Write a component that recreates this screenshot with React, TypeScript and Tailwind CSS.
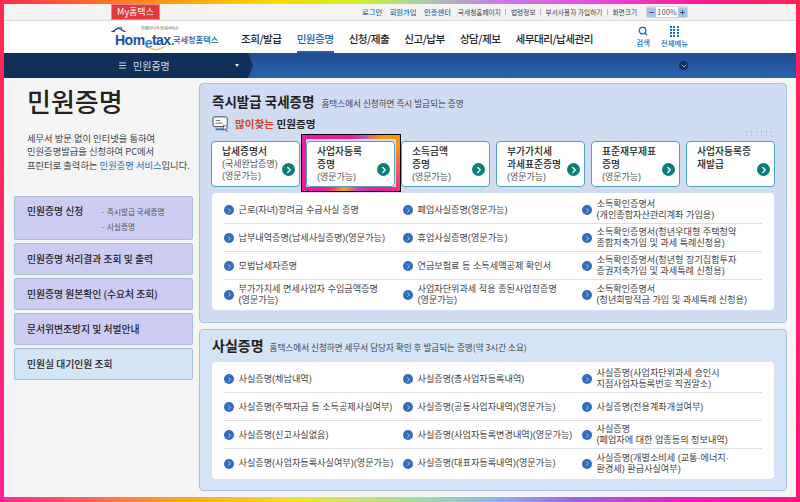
import { Fragment } from "react";
import { Search, ChevronRight, ChevronDown, Menu, Minus, Plus } from "lucide-react";

const font = "[font-family:'Noto_Sans_CJK_KR','Noto_Sans',sans-serif]";

const topLinksBlue = ["로그인", "회원가입", "인증센터"];
const topLinksGray = ["국세청홈페이지", "법령정보", "부서사용자 가입하기", "화면크기"];
const nav = ["조회/발급", "민원증명", "신청/제출", "신고/납부", "상담/제보", "세무대리/납세관리"];

const hot: { t: string[]; s: string[] }[] = [
  { t: ["납세증명서"], s: ["(국세완납증명)", "(영문가능)"] },
  { t: ["사업자등록", "증명"], s: ["(영문가능)"] },
  { t: ["소득금액", "증명"], s: ["(영문가능)"] },
  { t: ["부가가치세", "과세표준증명"], s: ["(영문가능)"] },
  { t: ["표준재무제표", "증명"], s: ["(영문가능)"] },
  { t: ["사업자등록증", "재발급"], s: [] },
];

const list1: string[][][] = [
  [["근로(자녀)장려금 수급사실 증명"], ["폐업사실증명(영문가능)"], ["소득확인증명서", "(개인종합자산관리계좌 가입용)"]],
  [["납부내역증명(납세사실증명)(영문가능)"], ["휴업사실증명(영문가능)"], ["소득확인증명서(청년우대형 주택청약", "종합저축가입 및 과세 특례신청용)"]],
  [["모범납세자증명"], ["연금보험료 등 소득세액공제 확인서"], ["소득확인증명서(청년형 장기집합투자", "증권저축가입 및 과세특례 신청용)"]],
  [["부가가치세 면세사업자 수입금액증명", "(영문가능)"], ["사업자단위과세 적용 종된사업장증명", "(영문가능)"], ["소득확인증명서", "(청년희망적금 가입 및 과세특례 신청용)"]],
];

const list2: string[][][] = [
  [["사실증명(체납내역)"], ["사실증명(총사업자등록내역)"], ["사실증명(사업자단위과세 승인시", "지점사업자등록번호 직권말소)"]],
  [["사실증명(주택자금 등 소득공제사실여부)"], ["사실증명(공동사업자내역)(영문가능)"], ["사실증명(전용계좌개설여부)"]],
  [["사실증명(신고사실없음)"], ["사실증명(사업자등록변경내역)(영문가능)"], ["사실증명", "(폐업자에 대한 업종등의 정보내역)"]],
  [["사실증명(사업자등록사실여부)(영문가능)"], ["사실증명(대표자등록내역)(영문가능)"], ["사실증명(개별소비세 (교통·에너지·", "환경세) 환급사실여부)"]],
];

function Lines({ items }: { items: string[] }) {
  return (
    <>
      {items.map((l, i) => (
        <Fragment key={l}>
          {i > 0 && <br />}
          {l}
        </Fragment>
      ))}
    </>
  );
}

function Bullet() {
  return (
    <span className="flex h-[10px] w-[10px] shrink-0 items-center justify-center rounded-full bg-[#2f6dbd]">
      <ChevronRight size={7} strokeWidth={3} className="text-[#c9d9ee]" />
    </span>
  );
}

function ListBox({ rows }: { rows: string[][][] }) {
  return (
    <div className="mx-[12px] rounded-[4px] bg-white px-[12px] pb-[2px] pt-[3px]">
      {rows.map((row, i) => (
        <div
          key={i}
          className={`grid h-[28px] grid-cols-[179px_179px_1fr] items-center pt-[1px] ${i < rows.length - 1 ? "border-b border-[#dfdfdf]" : ""}`}
        >
          {row.map((lines, j) => (
            <div key={j} className="flex items-center gap-[4.5px]">
              <Bullet />
              <div className="whitespace-nowrap text-[9.15px] leading-[11px] text-[#444] [font-family:'Liberation_Sans','Noto_Sans_CJK_KR',sans-serif]">
                <Lines items={lines} />
              </div>
            </div>
          ))}
        </div>
      ))}
    </div>
  );
}

function HotCard({ t, s, active }: { t: string[]; s: string[]; active?: boolean }) {
  return (
    <div className="relative h-[46px] w-[89px] rounded-[4px] border border-[#4ea3b8] bg-white pl-[10px] pt-[3px] [font-family:'Liberation_Sans','Noto_Sans_CJK_KR',sans-serif]">
      <div className="whitespace-nowrap text-[9.8px] font-medium leading-[13px] text-[#222]">
        <Lines items={t} />
      </div>
      {s.length > 0 && (
        <div className="whitespace-nowrap text-[9px] leading-[12px] text-[#555]">
          <Lines items={s} />
        </div>
      )}
      <span className="absolute right-[4px] top-[21px] flex h-[13px] w-[13px] items-center justify-center rounded-full bg-[#0b7f78]">
        <ChevronRight size={10} strokeWidth={3} className="text-white" />
      </span>
      {active && (
        <div className="pointer-events-none absolute -bottom-[6px] -left-[6px] -right-[7px] -top-[8px] border border-black bg-[conic-gradient(#f0189c_0deg,#b050c0_25deg,#f7941d_50deg,#f7941d_70deg,#f0189c_130deg,#d040b0_165deg,#f7a020_195deg,#f0189c_225deg,#f0189c_360deg)] p-[4px] [clip-path:polygon(0_0,100%_0,100%_100%,0_100%,0_0,5px_5px,5px_calc(100%-5px),calc(100%-5px)_calc(100%-5px),calc(100%-5px)_5px,5px_5px)]">
          <div className="h-full w-full border border-black" />
        </div>
      )}
    </div>
  );
}

const sideMenu = [
  "민원증명 처리결과 조회 및 출력",
  "민원증명 원본확인 (수요처 조회)",
  "문서위변조방지 및 처벌안내",
];

export default function App() {
  return (
    <div className={`relative h-[502px] w-[800px] overflow-hidden bg-[#f5f5f5] ${font}`}>
      {/* rainbow frame */}
      <div className="absolute inset-x-0 top-0 z-20 h-[4px] bg-[linear-gradient(90deg,#ff2a4d_0%,#ff8a1a_18%,#ffd500_33%,#cdf02a_45%,#a6d6a0_52%,#c77de8_62%,#e64bd8_75%,#ff1493_88%,#ff2255_100%)]" />
      <div className="absolute inset-x-0 bottom-0 z-20 h-[5px] bg-[linear-gradient(90deg,#ff2a8a_0%,#ffa020_22%,#f2e040_38%,#a0e0a0_52%,#8ab4f0_62%,#a060f0_72%,#e020d0_85%,#ff1480_100%)]" />
      <div className="absolute inset-y-0 left-0 z-20 w-[4px] bg-[linear-gradient(180deg,#ff2a4d_0%,#ff2090_100%)]" />
      <div className="absolute inset-y-0 right-0 z-20 w-[4px] bg-[linear-gradient(180deg,#ff2255_0%,#ff1480_100%)]" />

      <div className="flex h-full flex-col pt-[4px]">
        {/* utility bar */}
        <div className="flex h-[17px] items-center border-b border-[#dcdcdc] bg-[#f3f3f3] pl-[111px]">
          <div className="flex h-[16px] w-[49px] items-center justify-center border border-[#e88] bg-[#e23a3a] text-[9px] text-white">
            My홈택스
          </div>
          <div className="ml-[202px] flex items-center gap-[7.5px] text-[7.3px] font-medium text-[#1f6fb5]">
            {topLinksBlue.map((l) => (
              <span key={l} className="whitespace-nowrap">{l}</span>
            ))}
          </div>
          <div className="ml-[7px] flex items-center text-[6.7px] text-[#444]">
            {topLinksGray.map((l, i) => (
              <Fragment key={l}>
                {i > 0 && <span className="mx-[4.5px] h-[6px] w-px bg-[#bbb]" />}
                <span className="whitespace-nowrap">{l}</span>
              </Fragment>
            ))}
          </div>
          <div className="ml-[9px] flex h-[12px] w-[42px] items-center justify-between rounded-[2px] bg-[#d5d5d5] px-[1px]">
            <span className="flex h-[9px] w-[9px] items-center justify-center rounded-[1px] bg-[#a9c3e4]">
              <Minus size={7} strokeWidth={3} className="text-[#26486f]" />
            </span>
            <span className="bg-white px-[1px] text-[7.5px] leading-[10px] text-[#555]">100%</span>
            <span className="flex h-[9px] w-[9px] items-center justify-center rounded-[1px] bg-[#a9c3e4]">
              <Plus size={7} strokeWidth={3} className="text-[#26486f]" />
            </span>
          </div>
        </div>

        {/* header */}
        <div className="flex h-[32px] items-center bg-white pl-[110px]">
          <div className="relative flex h-[28px] w-[111px] shrink-0 items-end">
            <svg viewBox="0 0 60 14" className="absolute left-0 top-0 h-[14px] w-[30px]">
              <path d="M1 11 L17 1 L33 11 H28 L17 4.5 L10 8.5 V11 Z" fill="#1b4f9c" />
              <path d="M21 1 h3 v3 h-3 Z" fill="#1b4f9c" />
            </svg>
            <span className="absolute left-[31px] top-[3px] text-[4px] leading-[5px] text-[#555]">언제어디서 납세서비스</span>
            <span className="absolute left-[5px] top-[9px] text-[14px] font-bold leading-[16px] tracking-[-0.5px] text-[#13519e] [font-family:'Liberation_Sans',sans-serif]">
              Hom<span className="relative top-[3px] text-[#1d7ec9]">e</span>tax<span className="text-[#1fa14a]">.</span>
            </span>
            <svg viewBox="0 0 30 8" className="absolute left-[34px] top-[23px] h-[5px] w-[24px]">
              <path d="M1 1 Q15 10 29 1" fill="none" stroke="#f0a030" strokeWidth="1.6" />
            </svg>
            <span className="absolute left-[63px] top-[10px] whitespace-nowrap text-[8.2px] font-medium leading-[12px] text-[#1b5fa8]">국세청홈택스</span>
          </div>
          <div className="ml-[20px] flex h-full items-center gap-[15px]">
            {nav.map((n) => (
              <div
                key={n}
                className={`flex h-full items-center whitespace-nowrap border-b-2 pt-[5px] text-[10.6px] font-medium tracking-[-0.5px] ${n === "민원증명" ? "border-[#2a5da6] text-[#1a66b3]" : "border-transparent text-[#222]"}`}
              >
                {n}
              </div>
            ))}
          </div>
          <div className="ml-[43px] flex w-[14px] flex-col items-center">
            <Search size={10} strokeWidth={3.2} className="text-[#1b6fbe]" />
            <span className="mt-[2px] whitespace-nowrap text-[7.5px] font-medium leading-[10px] text-[#1b6fbe]">검색</span>
          </div>
          <div className="ml-[11px] flex flex-col items-center">
            <div className="grid h-[10px] w-[9px] grid-cols-3 gap-[1px]">
              {Array.from({ length: 12 }).map((_, i) => (
                <span key={i} className="h-[2px] w-[2px] bg-[#1b6fbe]" />
              ))}
            </div>
            <span className="mt-[2px] whitespace-nowrap text-[7.3px] font-medium leading-[10px] text-[#1b6fbe]">전체메뉴</span>
          </div>
        </div>

        {/* section bar */}
        <div className="relative flex h-[25px] items-center bg-[linear-gradient(180deg,#1f4c8f_0%,#2a62ae_100%)]">
          <div className="flex h-full w-[253px] shrink-0 items-center bg-[#102f59] pl-[118px] [clip-path:polygon(0_0,248px_0,100%_50%,248px_100%,0_100%)]">
            <Menu size={9} strokeWidth={2.5} className="text-[#d5dfec]" />
            <span className="ml-[6px] text-[10px] text-[#d5dfec]">민원증명</span>
            <span className="ml-[65px] h-0 w-0 border-x-[2.5px] border-t-[3px] border-x-transparent border-t-white" />
          </div>
          <span className="ml-[426px] flex h-[9px] w-[9px] items-center justify-center rounded-full bg-[#132f57]">
            <ChevronDown size={8} strokeWidth={3} className="text-[#9fb7d6]" />
          </span>
        </div>

        {/* body */}
        <div className="flex flex-1 pl-[14px] pr-[13px] pt-[5px]">
          {/* left column */}
          <div className="flex w-[179px] shrink-0 flex-col">
            <h1 className="ml-[13px] mt-[1px] whitespace-nowrap text-[26px] font-medium leading-[34px] text-[#222]">민원증명</h1>
            <p className="ml-[13px] mt-[14px] whitespace-nowrap text-[9.3px] leading-[13.3px] text-[#444]">
              세무서 방문 없이 인터넷을 통하여
              <br />
              민원증명발급을 신청하여 PC에서
              <br />
              프린터로 출력하는 <span className="text-[#1a72b8]">민원증명 서비스</span>입니다.
            </p>
            <div className="mt-[24px] flex h-[44px] items-start rounded-[2px] border border-[#a9bfe0] bg-[#ccccf2] pl-[12px] pt-[7px]">
              <span className="w-[74px] whitespace-nowrap text-[9.8px] font-medium leading-[15px] text-[#222]">민원증명 신청</span>
              <div className="whitespace-nowrap text-[7.6px] leading-[15px] text-[#555]">
                · 즉시발급 국세증명
                <br />
                · 사실증명
              </div>
            </div>
            <div className="mt-[3px] flex flex-col gap-[3px]">
              {sideMenu.map((m) => (
                <div key={m} className="flex h-[32px] items-center whitespace-nowrap rounded-[2px] border border-[#a9bfe0] bg-[#ccccf2] pl-[12px] text-[9.8px] font-medium text-[#222]">
                  {m}
                </div>
              ))}
              <div className="flex h-[32px] items-center rounded-[2px] border border-[#a9bfe0] bg-[#d4e5f5] pl-[12px] text-[9.8px] font-medium text-[#222]">
                민원실 대기인원 조회
              </div>
            </div>
          </div>

          {/* right column */}
          <div className="ml-[6px] flex flex-1 flex-col gap-[6px]">
            <section className="relative h-[240px] rounded-[4px] border border-[#a9c2e2] bg-[#d0dcf2]">
              <div className="ml-[12px] mt-[7px] flex items-baseline gap-[7px]">
                <h2 className="whitespace-nowrap text-[13.5px] font-bold leading-[20px] text-[#222]">즉시발급 국세증명</h2>
                <span className="whitespace-nowrap text-[8.6px] text-[#444]">홈택스에서 신청하면 즉시 발급되는 증명</span>
              </div>
              <div className="ml-[12px] mt-[4px] flex h-[18px] items-center gap-[5px]">
                <svg viewBox="0 0 20 18" className="h-[16px] w-[18px]">
                  <rect x="1" y="1" width="16" height="11" rx="2" fill="#fff" stroke="#333" strokeWidth="1" />
                  <path d="M4 5h5M4 8h8" stroke="#333" strokeWidth="0.8" />
                  <path d="M4 14h10v2H4z" fill="#2f6dbd" />
                  <path d="M13 10l5 3-2 1 1 3-1 .5-1-3-2 1z" fill="#fff" stroke="#333" strokeWidth="0.7" />
                </svg>
                <span className="whitespace-nowrap text-[10.6px] font-bold text-[#222]">
                  <span className="text-[#d8401f]">많이찾는</span> 민원증명
                </span>
              </div>
              <div className="absolute right-[12px] top-[46px] h-[6px] w-[30px] bg-[radial-gradient(circle,#a8bde0_1px,transparent_1px)] bg-[length:5px_4px]" />
              <div className="mx-[11px] mt-[8px] flex justify-between">
                {hot.map((c, i) => (
                  <HotCard key={i} t={c.t} s={c.s} active={i === 1} />
                ))}
              </div>
              <div className="mt-[6px]">
                <ListBox rows={list1} />
              </div>
            </section>

            <section className="h-[162px] rounded-[4px] border border-[#a9c2e2] bg-[#d3e4f4]">
              <div className="ml-[12px] mt-[4px] flex items-baseline gap-[6px]">
                <h2 className="whitespace-nowrap text-[14px] font-bold leading-[22px] text-[#222]">사실증명</h2>
                <span className="whitespace-nowrap text-[8.6px] text-[#444]">홈택스에서 신청하면 세무서 담당자 확인 후 발급되는 증명(약 3시간 소요)</span>
              </div>
              <div className="mt-[6px]">
                <ListBox rows={list2} />
              </div>
            </section>
          </div>
        </div>
      </div>
    </div>
  );
}
